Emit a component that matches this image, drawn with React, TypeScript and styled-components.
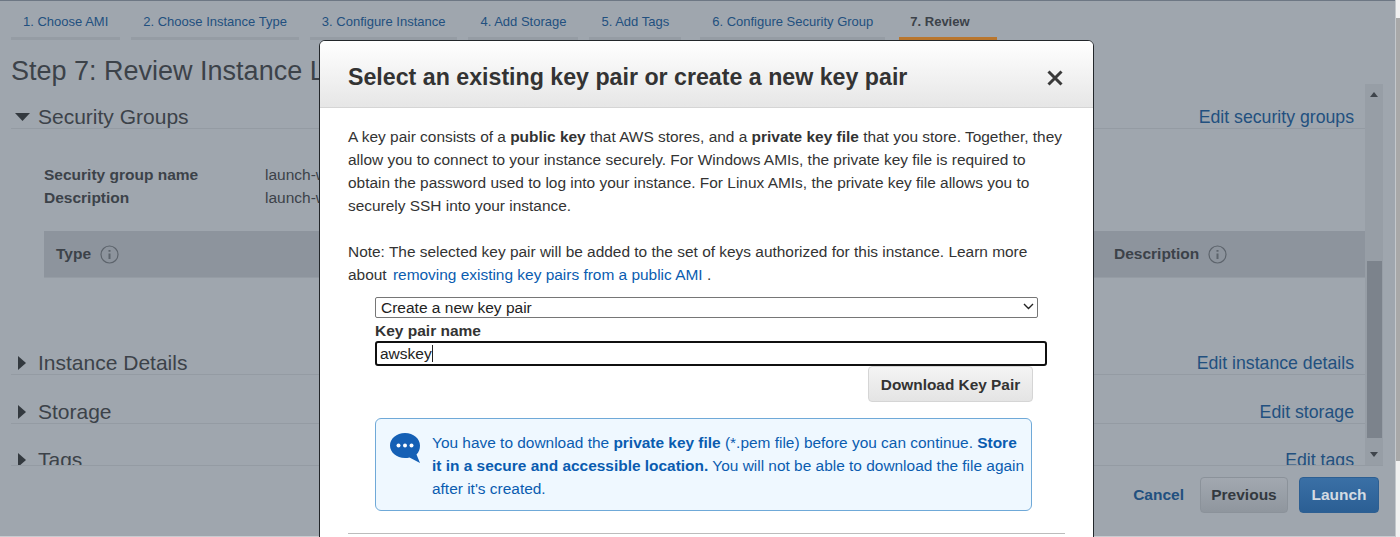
import styled, { createGlobalStyle } from "styled-components";

const GlobalStyle = createGlobalStyle`
    html, body {
        margin: 0;
        padding: 0;
        height: 100%;
        overflow: hidden;
        background: #9fa6ae;
        font-family: "Liberation Sans", Arial, sans-serif;
    }
`

const Page = styled.div`
    position: relative;
    width: 1400px;
    height: 537px;
    overflow: hidden;
    display: flex;
`

const Wizard = styled.div`
    flex: 1;
    min-width: 0;
    display: flex;
    flex-direction: column;
    box-sizing: border-box;
    background: #9fa6ae;
    border-top: 1px solid #6d7784;
    border-bottom: 1px solid #c9ccd0;
`

const WindowBar = styled.div`
    width: 5px;
    box-sizing: border-box;
    padding-top: 18px;
    background: #f1f1f1;
    border-left: 1px solid #c4c8cc;
`

const WindowThumb = styled.div`
    height: 443px;
    background: #a8a8a8;
`

const Tabs = styled.div`
    display: flex;
    gap: 11px;
    padding: 0 0 0 11px;
    height: 40px;
    flex-shrink: 0;
    box-sizing: border-box;
`

const Tab = styled.div<{ $active?: boolean; $left?: number; $right?: number; $after?: number }>`
    display: flex;
    align-items: center;
    height: 39px;
    padding: 4px ${p => p.$right ?? 12}px 0 ${p => p.$left ?? 12}px;
    margin-right: ${p => p.$after ?? 0}px;
    box-sizing: border-box;
    font-size: 13px;
    font-weight: ${p => p.$active ? 700 : 400};
    color: ${p => p.$active ? "#3c4249" : "#22507f"};
    border-bottom: 3px solid ${p => p.$active ? "#b9762e" : "#959ca4"};
`

const Title = styled.h1`
    margin: 13px 0 0 11px;
    height: 34px;
    line-height: 34px;
    font-size: 27px;
    font-weight: 400;
    color: #3c4249;
    white-space: nowrap;
    flex-shrink: 0;
`

const Main = styled.div`
    display: flex;
    flex: 1;
    min-height: 0;
    margin-top: -4px;
`

const Sections = styled.div`
    flex: 1;
    min-width: 0;
    height: 381px;
    overflow: hidden;
    padding-left: 11px;
    padding-top: 20px;
    box-sizing: border-box;
`

const SectionHead = styled.div<{ $gap: number }>`
    display: flex;
    align-items: center;
    height: 25px;
    box-sizing: border-box;
    padding-top: 1px;
    margin-top: ${p => p.$gap}px;
    border-bottom: 1px solid #949ba3;
`

const CaretBox = styled.svg`
    width: 27px;
    height: 16px;
    flex-shrink: 0;
    fill: #33393f;
`

const SectionName = styled.span`
    flex: 1;
    font-size: 21px;
    color: #3c4249;
`

const EditLink = styled.span`
    font-size: 17.7px;
    color: #22507f;
    margin-right: 11px;
    padding-top: 2px;
`

const Details = styled.div`
    display: grid;
    grid-template-columns: 221px 1fr;
    row-gap: 6px;
    margin: 37px 0 0 33px;
    font-size: 15.5px;
    line-height: 17px;
    color: #3c4249;
`

const DetailLabel = styled.span`
    font-weight: 700;
`

const TableHead = styled.div`
    display: flex;
    align-items: center;
    height: 47px;
    box-sizing: border-box;
    margin: 25px 0 0 33px;
    padding-left: 12px;
    background: #8d949d;
    border-bottom: 1px solid #959ca4;
`

const HeadCell = styled.div<{ $grow?: boolean }>`
    display: flex;
    align-items: center;
    gap: 9px;
    font-size: 15.5px;
    font-weight: 700;
    color: #3c4249;
    flex: ${p => p.$grow ? "0 0 1058px" : "0 1 auto"};
`

const InfoIcon = styled.svg`
    width: 19px;
    height: 19px;
    fill: none;
    stroke: #5d646c;
`

const Spacer = styled.div`
    height: 72px;
`

const Scrollbar = styled.div`
    width: 18px;
    height: 381px;
    margin-right: 12px;
    background: #979ea6;
    display: flex;
    flex-direction: column;
    align-items: center;
    padding-top: 177px;
    box-sizing: border-box;
    position: relative;
`

const ScrollThumb = styled.div`
    width: 15px;
    height: 177px;
    background: #7c838c;
`

const ScrollArrow = styled.svg<{ $down?: boolean }>`
    position: absolute;
    left: 5px;
    width: 8px;
    height: 5px;
    fill: #3f454c;
    ${p => p.$down ? "bottom: 8px;" : "top: 8px;"}
`

const Footer = styled.div`
    display: flex;
    justify-content: flex-end;
    align-items: center;
    height: 71px;
    flex-shrink: 0;
    margin: 0 12px 0 11px;
    padding: 0 4px 13px 0;
    box-sizing: border-box;
    border-top: 1px solid #949ba3;
    font-size: 15.5px;
    font-weight: 700;
`

const CancelLink = styled.span`
    color: #22507f;
    margin-right: 16px;
`

const FooterButton = styled.div<{ $primary?: boolean }>`
    display: flex;
    align-items: center;
    justify-content: center;
    height: 36px;
    box-sizing: border-box;
    border-radius: 4px;
    width: ${p => p.$primary ? "80px" : "88px"};
    margin-left: ${p => p.$primary ? "11px" : "0"};
    color: ${p => p.$primary ? "#d4dbe3" : "#33393f"};
    border: 1px solid ${p => p.$primary ? "#2d5f92" : "#8b929a"};
    background: ${p => p.$primary
        ? "linear-gradient(#3a70a6, #2b5f94)"
        : "linear-gradient(#a2a8b0, #8f969e)"};
`

const Modal = styled.div`
    position: absolute;
    left: 319px;
    top: 40px;
    width: 775px;
    height: 520px;
    box-sizing: border-box;
    background: #fff;
    border: 1px solid #23272b;
    border-radius: 6px;
`

const ModalHeader = styled.div`
    display: flex;
    align-items: center;
    justify-content: space-between;
    height: 67px;
    box-sizing: border-box;
    padding: 7px 28px 0 28px;
    border-radius: 5px 5px 0 0;
    border-bottom: 1px solid #d5d5d5;
    background: linear-gradient(#ffffff, #e6e6e6);
`

const ModalTitle = styled.h2`
    margin: 0;
    font-size: 23.2px;
    font-weight: 700;
    color: #333;
`

const CloseIcon = styled.svg`
    width: 20px;
    height: 20px;
    stroke: #3a3a3a;
    stroke-width: 3;
    fill: none;
`

const ModalBody = styled.div`
    padding: 17px 28px 0;
    font-size: 15.45px;
    line-height: 23px;
    color: #333;
`

const Paragraph = styled.p`
    margin: 0 0 23px;
    white-space: nowrap;
`

const BlueLink = styled.span`
    color: #0a5cb0;
    margin-left: 2px;
`

const KeyForm = styled.div`
    display: flex;
    flex-direction: column;
    align-items: flex-start;
    margin: -13px 0 0 27px;
`

const SelectWrap = styled.div`
    position: relative;
    width: 663px;
    height: 21px;
`

const KeySelect = styled.select`
    width: 100%;
    height: 100%;
    box-sizing: border-box;
    padding: 0 0 0 5px;
    appearance: none;
    font-family: "Liberation Sans", Arial, sans-serif;
    font-size: 15.5px;
    color: #222;
    background: #fff;
    border: 1px solid #767676;
    border-radius: 2px;
`

const SelectChevron = styled.svg`
    position: absolute;
    right: 4px;
    top: 7px;
    width: 11px;
    height: 7px;
    fill: none;
    stroke: #222;
    stroke-width: 1.4;
    pointer-events: none;
`

const FieldLabel = styled.label`
    font-size: 15.5px;
    font-weight: 700;
    line-height: 21px;
    margin-top: 3px;
    color: #333;
`

const KeyInput = styled.div`
    width: 672px;
    height: 25px;
    box-sizing: border-box;
    display: flex;
    align-items: center;
    padding-left: 3px;
    font-size: 15.5px;
    color: #222;
    border: 2px solid #101010;
    border-radius: 3px;
`

const InputCaret = styled.span`
    width: 1px;
    height: 17px;
    background: #222;
`

const DownloadRow = styled.div`
    width: 658px;
    display: flex;
    justify-content: flex-end;
`

const DownloadButton = styled.div`
    display: flex;
    align-items: center;
    justify-content: center;
    width: 165px;
    height: 36px;
    box-sizing: border-box;
    font-size: 15.4px;
    font-weight: 700;
    color: #333;
    border: 1px solid #d5d5d5;
    border-radius: 4px;
    background: linear-gradient(#f4f4f4, #e4e4e4);
`

const InfoBox = styled.div`
    display: flex;
    gap: 10px;
    width: 657px;
    height: 93px;
    box-sizing: border-box;
    margin-top: 16px;
    padding: 13px 0 0 13px;
    color: #0a5cb0;
    background: #eff8ff;
    border: 1px solid #6fa9d8;
    border-radius: 6px;
`

const BubbleIcon = styled.svg`
    width: 33px;
    height: 32px;
    flex-shrink: 0;
`

const InfoText = styled.div`
    white-space: nowrap;
    margin-top: -1px;
`

const ModalRule = styled.div`
    height: 1px;
    margin-top: 22px;
    background: #bcbcbc;
`

const Info = () => (
    <InfoIcon viewBox="0 0 19 19">
        <circle cx="9.5" cy="9.5" r="8.5" strokeWidth="1.2" />
        <path d="M9.5 5v1.8M9.5 8.4v5.6" strokeWidth="2" />
    </InfoIcon>
)

const DownCaret = () => (
    <CaretBox viewBox="0 0 27 16"><path d="M4 4h15l-7.5 8z" /></CaretBox>
)

const RightCaret = () => (
    <CaretBox viewBox="0 0 27 16"><path d="M7 1l8 7-8 7z" /></CaretBox>
)

const tabs = ["1. Choose AMI", "2. Choose Instance Type", "3. Configure Instance", "4. Add Storage"]

export default function App() {
    return (
        <Page>
            <GlobalStyle />
            <Wizard>
                <Tabs>
                    {tabs.map(t => <Tab key={t}>{t}</Tab>)}
                    <Tab $after={8}>5. Add Tags</Tab>
                    <Tab $after={3}>6. Configure Security Group</Tab>
                    <Tab $active $left={11} $right={27}>7. Review</Tab>
                </Tabs>
                <Title>Step 7: Review Instance Launch</Title>
                <Main>
                    <Sections>
                        <SectionHead $gap={0}>
                            <DownCaret />
                            <SectionName>Security Groups</SectionName>
                            <EditLink>Edit security groups</EditLink>
                        </SectionHead>
                        <Details>
                            <DetailLabel>Security group name</DetailLabel>
                            <span>launch-wizard-1</span>
                            <DetailLabel>Description</DetailLabel>
                            <span>launch-wizard-1</span>
                        </Details>
                        <TableHead>
                            <HeadCell $grow>Type <Info /></HeadCell>
                            <HeadCell>Description <Info /></HeadCell>
                        </TableHead>
                        <Spacer />
                        <SectionHead $gap={0}>
                            <RightCaret />
                            <SectionName>Instance Details</SectionName>
                            <EditLink>Edit instance details</EditLink>
                        </SectionHead>
                        <SectionHead $gap={24}>
                            <RightCaret />
                            <SectionName>Storage</SectionName>
                            <EditLink>Edit storage</EditLink>
                        </SectionHead>
                        <SectionHead $gap={23}>
                            <RightCaret />
                            <SectionName>Tags</SectionName>
                            <EditLink>Edit tags</EditLink>
                        </SectionHead>
                    </Sections>
                    <Scrollbar>
                        <ScrollArrow viewBox="0 0 8 5"><path d="M4 0l4 5H0z" /></ScrollArrow>
                        <ScrollThumb />
                        <ScrollArrow $down viewBox="0 0 8 5"><path d="M0 0h8L4 5z" /></ScrollArrow>
                    </Scrollbar>
                </Main>
                <Footer>
                    <CancelLink>Cancel</CancelLink>
                    <FooterButton>Previous</FooterButton>
                    <FooterButton $primary>Launch</FooterButton>
                </Footer>
            </Wizard>
            <WindowBar>
                <WindowThumb />
            </WindowBar>
            <Modal>
                <ModalHeader>
                    <ModalTitle>Select an existing key pair or create a new key pair</ModalTitle>
                    <CloseIcon viewBox="0 0 20 20"><path d="M3.500 3.500l13 13M16.500 3.500l-13 13" /></CloseIcon>
                </ModalHeader>
                <ModalBody>
                    <Paragraph>
                        A key pair consists of a <b>public key</b> that AWS stores, and a <b>private key file</b> that you store. Together, they<br />
                        allow you to connect to your instance securely. For Windows AMIs, the private key file is required to<br />
                        obtain the password used to log into your instance. For Linux AMIs, the private key file allows you to<br />
                        securely SSH into your instance.
                    </Paragraph>
                    <Paragraph>
                        Note: The selected key pair will be added to the set of keys authorized for this instance. Learn more<br />
                        about <BlueLink>removing existing key pairs from a public AMI</BlueLink> .
                    </Paragraph>
                    <KeyForm>
                        <SelectWrap>
                            <KeySelect defaultValue="new">
                                <option value="new">Create a new key pair</option>
                                <option value="existing">Choose an existing key pair</option>
                            </KeySelect>
                            <SelectChevron viewBox="0 0 11 7"><path d="M1 1l4.500 4.500L10 1" /></SelectChevron>
                        </SelectWrap>
                        <FieldLabel>Key pair name</FieldLabel>
                        <KeyInput>awskey<InputCaret /></KeyInput>
                        <DownloadRow>
                            <DownloadButton>Download Key Pair</DownloadButton>
                        </DownloadRow>
                        <InfoBox>
                            <BubbleIcon viewBox="0 0 33 32">
                                <path fill="#1560b5" d="M16 1C7.500 1 1 6.600 1 13.500S7.500 26 16 26c1.600 0 3.100-.2 4.500-.6L31 31l-3.500-8.500c2.300-2.300 3.500-5.300 3.500-9C31 6.600 24.500 1 16 1z" />
                                <circle cx="9.500" cy="13.500" r="2" fill="#fff" />
                                <circle cx="16" cy="13.500" r="2" fill="#fff" />
                                <circle cx="22.500" cy="13.500" r="2" fill="#fff" />
                            </BubbleIcon>
                            <InfoText>
                                You have to download the <b>private key file</b> (*.pem file) before you can continue. <b>Store</b><br />
                                <b>it in a secure and accessible location.</b> You will not be able to download the file again<br />
                                after it's created.
                            </InfoText>
                        </InfoBox>
                    </KeyForm>
                    <ModalRule />
                </ModalBody>
            </Modal>
        </Page>
    )
}
